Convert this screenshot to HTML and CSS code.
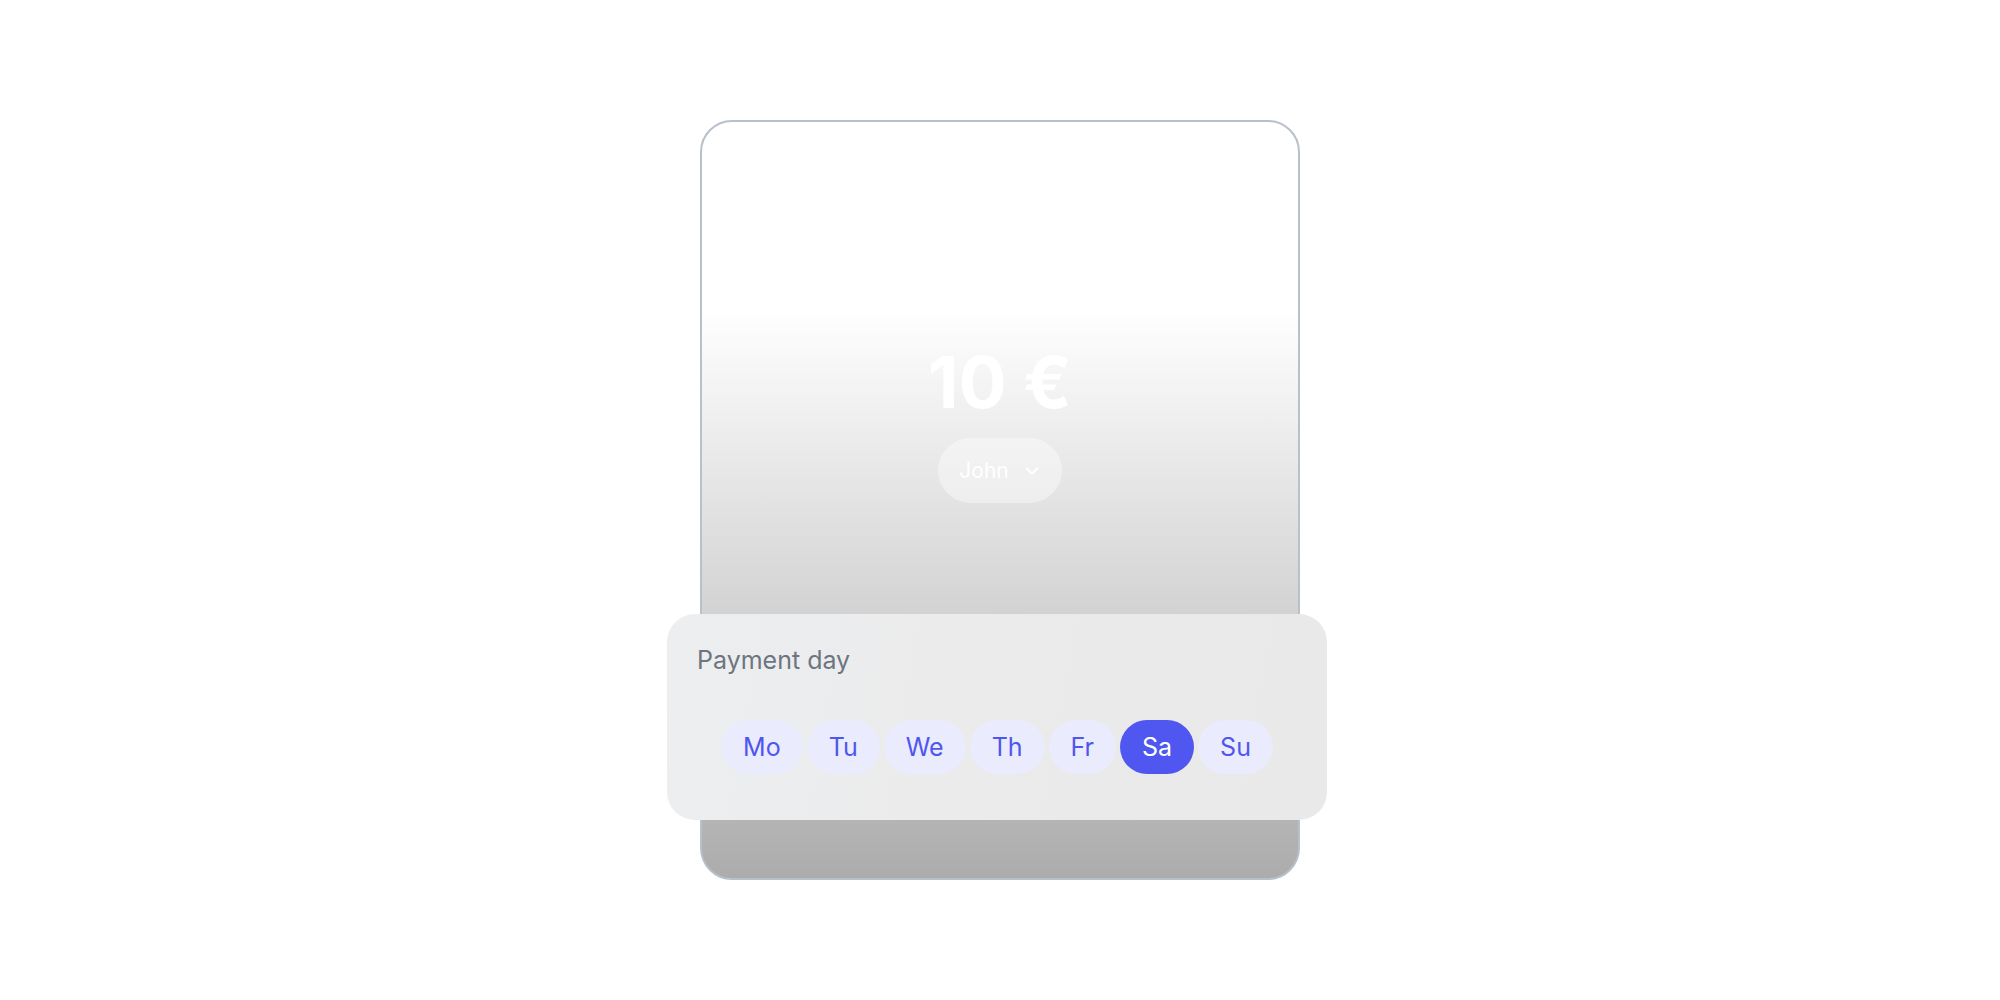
FILE: index.html
```
<!DOCTYPE html>
<html lang="en">
	<head>
		<meta charset="utf-8">
		<title>Payment</title>
		<link rel="stylesheet" href="styles.css">
	</head>
	<body>
		<div class="card">
			<div class="card-top">
				<div class="amount">10 €</div>
				<button class="person" type="button">
					<span>John</span>
					<svg class="chevron" width="16" height="16" viewBox="0 0 16 16" fill="none">
						<polyline points="2.5 5.5 8 10.5 13.5 5.5" stroke="#fff" stroke-width="2" stroke-linecap="round" stroke-linejoin="round"/>
					</svg>
				</button>
			</div>

			<div class="panel">
				<div class="panel-title">Payment day</div>
				<div class="days">
					<button class="day" type="button">Mo</button>
					<button class="day" type="button">Tu</button>
					<button class="day" type="button">We</button>
					<button class="day" type="button">Th</button>
					<button class="day" type="button">Fr</button>
					<button class="day active" type="button">Sa</button>
					<button class="day" type="button">Su</button>
				</div>
			</div>
		</div>
	</body>
</html>
```

FILE: styles.css
```
body{
	margin: 0;
	min-height: 100vh;
	display: flex;
	align-items: center;
	justify-content: center;
	background: #fff;
	font-family: Inter, "Noto Sans", sans-serif;
}

/*carta com o degrade*/
.card{
	position: relative;
	box-sizing: border-box;
	width: 600px;
	height: 760px;
	border: 2px solid #b8c0cb;
	border-radius: 32px;
	background: linear-gradient(180deg, #fff 0%, #fff 24.5%, #acacac 100%);
}

.card-top{
	display: flex;
	flex-direction: column;
	align-items: center;
	padding-top: 225px;
}

.amount{
	font-size: 71px;
	font-weight: 700;
	line-height: 1;
	color: #fff;
}

.person{
	display: flex;
	align-items: center;
	gap: 15px;
	height: 65px;
	margin-top: 20px;
	padding: 0 22px 0 21px;
	border: none;
	border-radius: 33px;
	background: rgba(255, 255, 255, 0.4);
	font-family: inherit;
	font-size: 21px;
	color: #fff;
}

.chevron{
	display: block;
}

/*painel sobreposto*/
.panel{
	position: absolute;
	left: -35px;
	top: 492px;
	box-sizing: border-box;
	width: 660px;
	padding: 32px 30px 46px;
	border-radius: 28px;
	background: linear-gradient(100deg, #edeef0 0%, #eaeaea 60%, #e9e9e9 100%);
}

.panel-title{
	font-size: 25px;
	line-height: 29px;
	color: #6d7581;
}

.days{
	display: flex;
	justify-content: center;
	gap: 4px;
	margin-top: 45px;
}

.day{
	height: 54px;
	padding: 0 22px;
	border: none;
	border-radius: 27px;
	background: #eaebfc;
	font-family: inherit;
	font-size: 25px;
	color: #4e56ef;
}

.day.active{
	background: #4f57f0;
	color: #fff;
}
```
